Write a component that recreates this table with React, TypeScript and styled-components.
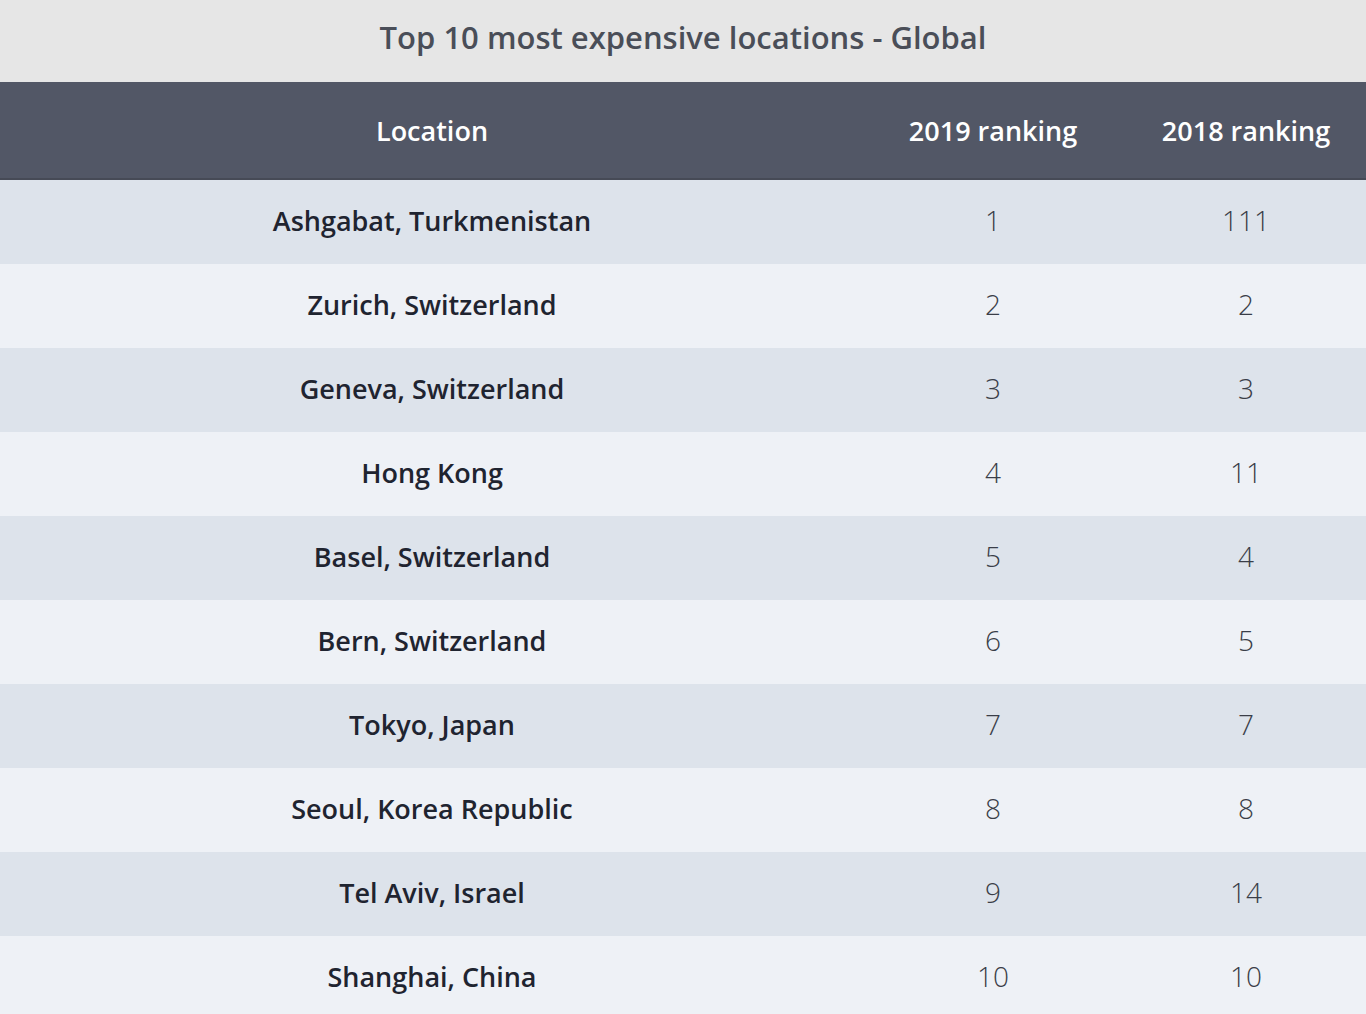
import React from "react";
import styled, { createGlobalStyle } from "styled-components";

const GlobalStyle = createGlobalStyle`
  html, body {
    margin: 0;
    padding: 0;
    background: #eef1f6;
    font-family: "Open Sans", "Liberation Sans", sans-serif;
  }
`;

const Wrapper = styled.div`
  width: 1366px;
  height: 1014px;
  overflow: hidden;
`;

const Title = styled.div`
  height: 82px;
  background: #e6e6e6;
  color: #4a4e58;
  font-size: 31px;
  font-weight: 600;
  display: flex;
  align-items: center;
  justify-content: center;
  padding-bottom: 8px;
  box-sizing: border-box;
`;

const Grid = styled.div`
  display: grid;
  width: 1370px;
  grid-template-columns: 864px 258px 1fr;
`;

const HeadCell = styled.div`
  height: 98px;
  box-sizing: border-box;
  background: #525766;
  border-bottom: 2px solid #464a56;
  color: #ffffff;
  font-size: 27px;
  font-weight: 600;
  display: flex;
  align-items: center;
  justify-content: center;
`;

const Cell = styled.div<{ $alt: boolean; $bold?: boolean }>`
  height: 84px;
  box-sizing: border-box;
  padding-bottom: 4px;
  background: ${(p) => (p.$alt ? "#eef1f6" : "#dde3eb")};
  color: ${(p) => (p.$bold ? "#1f2430" : "#3a3e48")};
  font-size: ${(p) => (p.$bold ? "27px" : "28px")};
  font-weight: ${(p) => (p.$bold ? 600 : 300)};
  display: flex;
  align-items: center;
  justify-content: center;
`;

const rows: [string, string, string][] = [
  ["Ashgabat, Turkmenistan", "1", "111"],
  ["Zurich, Switzerland", "2", "2"],
  ["Geneva, Switzerland", "3", "3"],
  ["Hong Kong", "4", "11"],
  ["Basel, Switzerland", "5", "4"],
  ["Bern, Switzerland", "6", "5"],
  ["Tokyo, Japan", "7", "7"],
  ["Seoul, Korea Republic", "8", "8"],
  ["Tel Aviv, Israel", "9", "14"],
  ["Shanghai, China", "10", "10"],
];

export default function App() {
  return (
    <Wrapper>
      <GlobalStyle />
      <Title>Top 10 most expensive locations - Global</Title>
      <Grid>
        <HeadCell>Location</HeadCell>
        <HeadCell>2019 ranking</HeadCell>
        <HeadCell>2018 ranking</HeadCell>
        {rows.map(([loc, a, b], i) => (
          <React.Fragment key={loc}>
            <Cell $alt={i % 2 === 1} $bold>
              {loc}
            </Cell>
            <Cell $alt={i % 2 === 1}>{a}</Cell>
            <Cell $alt={i % 2 === 1}>{b}</Cell>
          </React.Fragment>
        ))}
      </Grid>
    </Wrapper>
  );
}
